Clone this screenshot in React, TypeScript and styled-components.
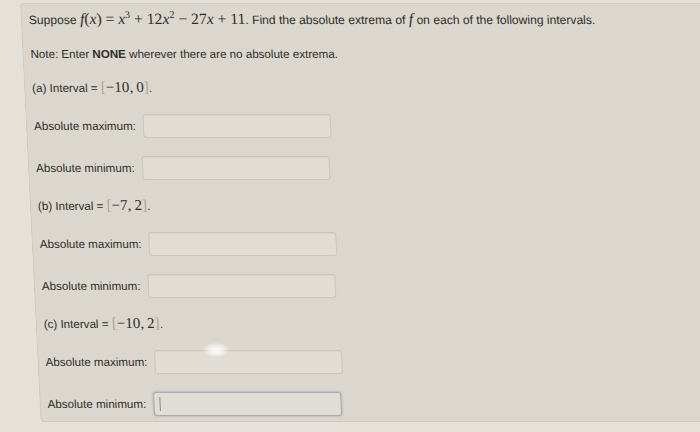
import React from "react";
import styled, { createGlobalStyle } from "styled-components";

const Global = createGlobalStyle`
  html, body { margin: 0; padding: 0; }
  body {
    width: 700px;
    height: 432px;
    overflow: hidden;
    background: #e5e0d8;
    font-family: "Liberation Sans", Arial, sans-serif;
    color: #2e2d2b;
  }
`;

const Page = styled.div`
  position: relative;
  width: 700px;
  height: 432px;
  padding: 3px 0 0 20px;
  box-sizing: border-box;
  overflow: hidden;
`;

const Panel = styled.div`
  width: 720px;
  height: 419px;
  box-sizing: border-box;
  background: #dcd7ce;
  border-left: 1px solid #cdc7bd;
  border-top: 1px solid #d3cdc3;
  border-bottom: 1px solid #cfc9bf;
  border-radius: 3px 0 0 3px;
  padding: 8px 0 0 7px;
  display: flex;
  flex-direction: column;
  gap: 18px;
  transform: skewX(2.8deg);
  transform-origin: 0 0;
`;

const Para = styled.p<{ $size?: number }>`
  margin: 0;
  font-size: ${(p) => p.$size ?? 11.6}px;
  line-height: 16px;
  height: 16px;
  white-space: nowrap;
`;

const Math = styled.span`
  font-family: "Liberation Serif", "Times New Roman", serif;
  font-size: 1.3em;
  line-height: 0;
`;

const V = styled.i`
  font-style: italic;
`;

const Op = styled.span`
  margin: 0 0.24em;
`;

const Sup = styled.span`
  font-size: 0.66em;
  position: relative;
  top: -0.6em;
  line-height: 0;
`;

const Br = styled.span`
  color: #a9a49b;
`;

const Row = styled.div`
  display: flex;
  align-items: center;
  gap: 7px;
  height: 24px;
`;

const Label = styled.span`
  font-size: 11.6px;
  line-height: 16px;
  white-space: nowrap;
`;

const Field = styled.div<{ $focused?: boolean }>`
  width: 188px;
  height: 24px;
  box-sizing: border-box;
  background: #e2ddd4;
  border: 1px solid ${(p) => (p.$focused ? "#a8abb4" : "#cbc5bb")};
  border-radius: 3px;
  box-shadow: ${(p) =>
    p.$focused ? "0 0 2px 1px rgba(150,160,185,0.45)" : "inset 0 1px 1px rgba(0,0,0,0.04)"};
  display: flex;
  align-items: center;
  padding-left: 5px;
`;

const Caret = styled.span`
  width: 1px;
  height: 14px;
  background: #8a8a8a;
`;

const Glare = styled.div`
  position: absolute;
  left: 203px;
  top: 343px;
  width: 26px;
  height: 14px;
  border-radius: 50%;
  background: radial-gradient(ellipse at center, rgba(255,255,255,0.95) 0%, rgba(255,255,255,0.6) 40%, rgba(255,255,255,0) 75%);
  pointer-events: none;
`;

const Interval: React.FC<{ tag: string; lo: string; hi: string }> = ({ tag, lo, hi }) => (
  <Para>
    ({tag}) Interval = <Math><Br>[</Br>−{lo},&thinsp;{hi}<Br>]</Br></Math>.
  </Para>
);

const AnswerRow: React.FC<{ label: string; focused?: boolean }> = ({ label, focused }) => (
  <Row>
    <Label>{label}</Label>
    <Field $focused={focused}>{focused ? <Caret /> : null}</Field>
  </Row>
);

export default function App() {
  const parts = [
    { tag: "a", lo: "10", hi: "0" },
    { tag: "b", lo: "7", hi: "2" },
    { tag: "c", lo: "10", hi: "2" },
  ];
  return (
    <>
      <Global />
      <Page>
        <Panel>
          <Para $size={12.1}>
            Suppose{" "}
            <Math>
              <V>f</V>(<V>x</V>)<Op>=</Op><V>x</V>
              <Sup>3</Sup>
              <Op>+</Op>12<V>x</V>
              <Sup>2</Sup>
              <Op>−</Op>27<V>x</V>
              <Op>+</Op>11
            </Math>
            . Find the absolute extrema of <Math><V>f</V></Math> on each of the following intervals.
          </Para>
          <Para>
            Note: Enter <b>NONE</b> wherever there are no absolute extrema.
          </Para>
          {parts.map((p, i) => (
            <React.Fragment key={p.tag}>
              <Interval tag={p.tag} lo={p.lo} hi={p.hi} />
              <AnswerRow label="Absolute maximum:" />
              <AnswerRow label="Absolute minimum:" focused={i === 2} />
            </React.Fragment>
          ))}
        </Panel>
        <Glare />
      </Page>
    </>
  );
}
